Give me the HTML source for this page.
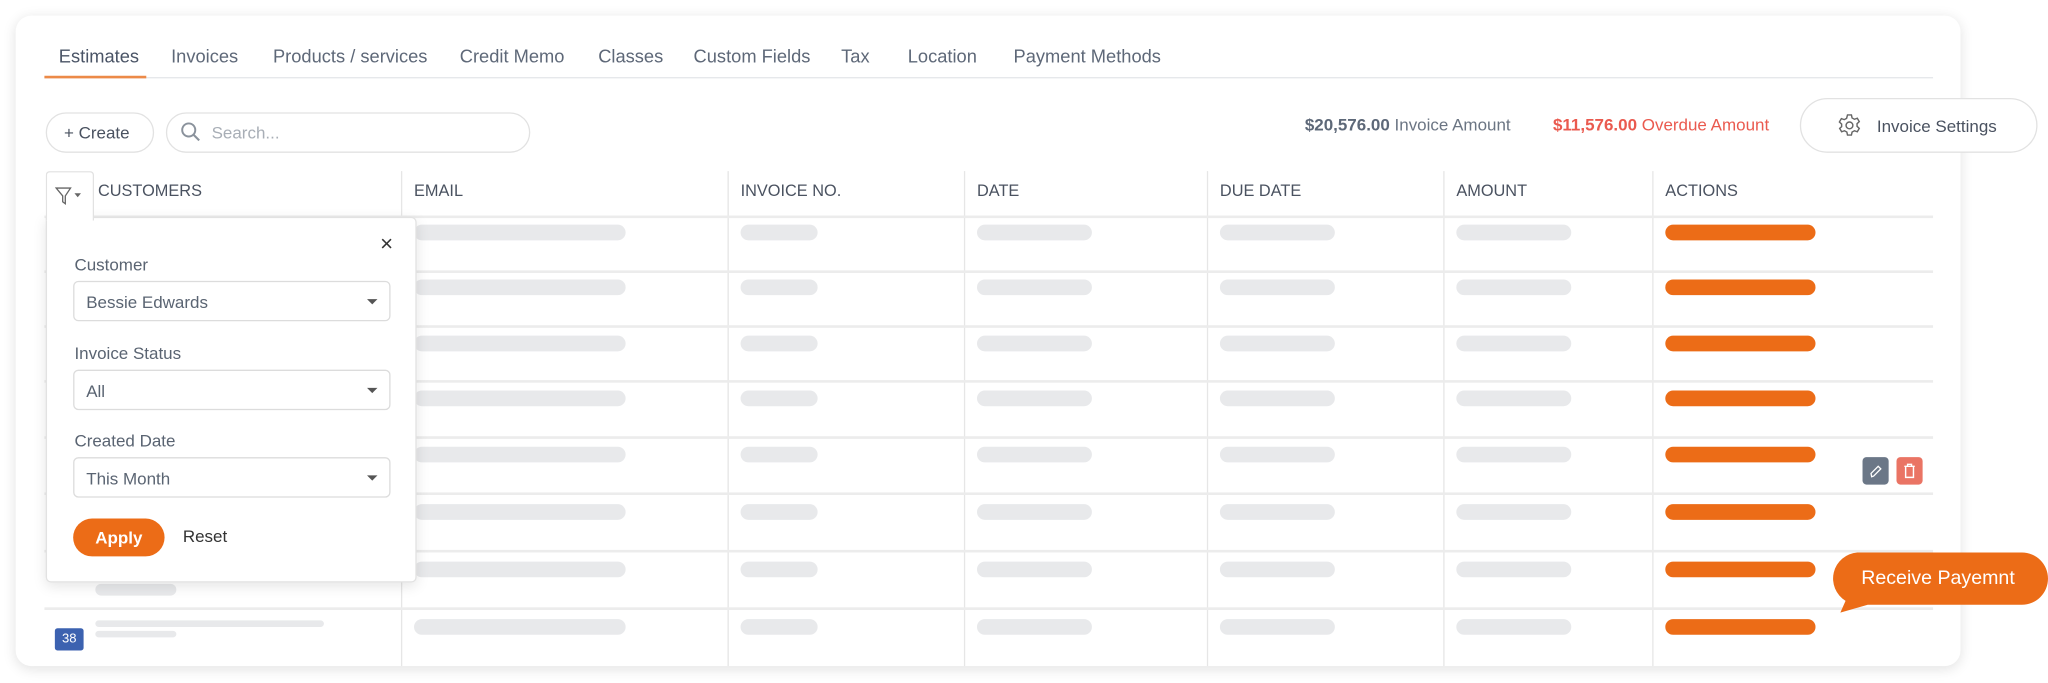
<!DOCTYPE html>
<html><head><meta charset="utf-8"><style>
*{box-sizing:border-box;margin:0;padding:0}
body{width:2048px;height:683px;background:#fff;font-family:"Liberation Sans",sans-serif;position:relative;overflow:hidden;color:#5a6472}
#w{position:absolute;left:0;top:0;width:1568px;height:523px;transform:scale(1.30612);transform-origin:0 0}
#w div{white-space:nowrap}
.card{position:absolute;left:12px;top:12px;width:1489px;height:498px;border-radius:12px;background:#fff;box-shadow:0 2px 10px rgba(0,0,0,.12)}
.abs{position:absolute}
.tab{position:absolute;top:35px;font-size:14px;color:#5e6878}
.bar{position:absolute;height:12px;border-radius:6px;background:#e8e9eb}
.or{position:absolute;height:12px;border-radius:6px;background:#ec6c17}
.vl{position:absolute;top:131px;width:1px;height:379px;background:#e6e6e6}
.hl{position:absolute;left:34px;width:1446px;height:2px;background:#ececec}
.th{position:absolute;top:139px;font-size:12.5px;color:#4a5260}
.sel{position:absolute;left:56px;width:243px;height:31px;border:1px solid #dcdcdc;border-radius:4px;font-size:13px;color:#5a6472;padding:8px 9px}
.sel:after{content:"";position:absolute;right:9px;top:13px;border:4px solid transparent;border-top:4px solid #555}
.lbl{position:absolute;left:57px;font-size:13px;color:#5a6472}
</style></head><body><div id="w">
<div class="card"></div>
<div class="tab" style="left:45px;color:#4a5466">Estimates</div>
<div class="tab" style="left:131px">Invoices</div>
<div class="tab" style="left:209px">Products / services</div>
<div class="tab" style="left:352px">Credit Memo</div>
<div class="tab" style="left:458px">Classes</div>
<div class="tab" style="left:531px">Custom Fields</div>
<div class="tab" style="left:644px">Tax</div>
<div class="tab" style="left:695px">Location</div>
<div class="tab" style="left:776px">Payment Methods</div>
<div class="abs" style="left:34px;top:59px;width:1446px;height:1px;background:#e4e6ea"></div>
<div class="abs" style="left:34px;top:58px;width:78px;height:2px;background:#ec8a48"></div>

<div class="abs" style="left:35px;top:86px;width:83px;height:31px;border:1px solid #e2e2e2;border-radius:16px;font-size:13px;color:#4a5260;padding:7px 0 0 13px">+ Create</div>
<div class="abs" style="left:127px;top:86px;width:279px;height:31px;border:1px solid #e2e2e2;border-radius:16px;font-size:13px;color:#a8aeb6;padding:7px 0 0 34px">Search...</div>
<svg class="abs" style="left:138px;top:93px" width="16" height="16" viewBox="0 0 16 16"><circle cx="6.5" cy="6.5" r="5" fill="none" stroke="#8a929c" stroke-width="1.5"/><path d="M10 10l4.5 4.5" stroke="#8a929c" stroke-width="1.6"/></svg>

<div class="abs" style="left:999px;top:88px;font-size:13px;color:#6b7583"><b style="color:#5d6878">$20,576.00</b> Invoice Amount</div>
<div class="abs" style="left:1189px;top:88px;font-size:13px;color:#ea5a4f"><b>$11,576.00</b> Overdue Amount</div>
<div class="abs" style="left:1378px;top:75px;width:182px;height:42px;border:1px solid #e2e2e2;border-radius:21px;background:#fff;font-size:13px;color:#4a5260;padding:13px 0 0 58px">Invoice Settings</div>
<svg class="abs" style="left:1406px;top:86px" width="20" height="20" viewBox="0 0 20 20"><path d="M8.5 2h3l.5 2.3 1.8 1 2.2-.8 1.5 2.6-1.7 1.6v2l1.7 1.6-1.5 2.6-2.2-.8-1.8 1-.5 2.3h-3l-.5-2.3-1.8-1-2.2.8-1.5-2.6L4 11V9L2.3 7.4 3.8 4.8l2.2.8 1.8-1z" fill="none" stroke="#666" stroke-width="1.1"/><circle cx="10" cy="10" r="2.6" fill="none" stroke="#666" stroke-width="1.1"/></svg>

<div class="vl" style="left:307px"></div><div class="vl" style="left:557px"></div><div class="vl" style="left:738px"></div><div class="vl" style="left:924px"></div><div class="vl" style="left:1105px"></div><div class="vl" style="left:1265px"></div>
<div class="hl" style="top:165px"></div><div class="hl" style="top:207px"></div><div class="hl" style="top:249px"></div><div class="hl" style="top:291px"></div><div class="hl" style="top:334px"></div><div class="hl" style="top:377px"></div><div class="hl" style="top:421px"></div><div class="hl" style="top:465px"></div>
<div class="th" style="left:75px">CUSTOMERS</div><div class="th" style="left:317px">EMAIL</div><div class="th" style="left:567px">INVOICE NO.</div><div class="th" style="left:748px">DATE</div><div class="th" style="left:934px">DUE DATE</div><div class="th" style="left:1115px">AMOUNT</div><div class="th" style="left:1275px">ACTIONS</div>

<div class="bar" style="left:317px;top:172px;width:162px"></div><div class="bar" style="left:567px;top:172px;width:59px"></div><div class="bar" style="left:748px;top:172px;width:88px"></div><div class="bar" style="left:934px;top:172px;width:88px"></div><div class="bar" style="left:1115px;top:172px;width:88px"></div><div class="or" style="left:1275px;top:172px;width:115px"></div>
<div class="bar" style="left:317px;top:214px;width:162px"></div><div class="bar" style="left:567px;top:214px;width:59px"></div><div class="bar" style="left:748px;top:214px;width:88px"></div><div class="bar" style="left:934px;top:214px;width:88px"></div><div class="bar" style="left:1115px;top:214px;width:88px"></div><div class="or" style="left:1275px;top:214px;width:115px"></div>
<div class="bar" style="left:317px;top:257px;width:162px"></div><div class="bar" style="left:567px;top:257px;width:59px"></div><div class="bar" style="left:748px;top:257px;width:88px"></div><div class="bar" style="left:934px;top:257px;width:88px"></div><div class="bar" style="left:1115px;top:257px;width:88px"></div><div class="or" style="left:1275px;top:257px;width:115px"></div>
<div class="bar" style="left:317px;top:299px;width:162px"></div><div class="bar" style="left:567px;top:299px;width:59px"></div><div class="bar" style="left:748px;top:299px;width:88px"></div><div class="bar" style="left:934px;top:299px;width:88px"></div><div class="bar" style="left:1115px;top:299px;width:88px"></div><div class="or" style="left:1275px;top:299px;width:115px"></div>
<div class="bar" style="left:317px;top:342px;width:162px"></div><div class="bar" style="left:567px;top:342px;width:59px"></div><div class="bar" style="left:748px;top:342px;width:88px"></div><div class="bar" style="left:934px;top:342px;width:88px"></div><div class="bar" style="left:1115px;top:342px;width:88px"></div><div class="or" style="left:1275px;top:342px;width:115px"></div>
<div class="bar" style="left:317px;top:386px;width:162px"></div><div class="bar" style="left:567px;top:386px;width:59px"></div><div class="bar" style="left:748px;top:386px;width:88px"></div><div class="bar" style="left:934px;top:386px;width:88px"></div><div class="bar" style="left:1115px;top:386px;width:88px"></div><div class="or" style="left:1275px;top:386px;width:115px"></div>
<div class="bar" style="left:317px;top:430px;width:162px"></div><div class="bar" style="left:567px;top:430px;width:59px"></div><div class="bar" style="left:748px;top:430px;width:88px"></div><div class="bar" style="left:934px;top:430px;width:88px"></div><div class="bar" style="left:1115px;top:430px;width:88px"></div><div class="or" style="left:1275px;top:430px;width:115px"></div>
<div class="bar" style="left:317px;top:474px;width:162px"></div><div class="bar" style="left:567px;top:474px;width:59px"></div><div class="bar" style="left:748px;top:474px;width:88px"></div><div class="bar" style="left:934px;top:474px;width:88px"></div><div class="bar" style="left:1115px;top:474px;width:88px"></div><div class="or" style="left:1275px;top:474px;width:115px"></div>
<div class="bar" style="left:73px;top:447px;width:62px;height:9px"></div>
<div class="bar" style="left:73px;top:475px;width:175px;height:5px"></div>
<div class="bar" style="left:73px;top:483px;width:62px;height:5px"></div>
<div class="abs" style="left:42px;top:481px;width:22px;height:17px;background:#3c62b0;border-radius:2px;color:#fff;font-size:10px;text-align:center;line-height:17px">38</div>

<div class="abs" style="left:1426px;top:350px;width:20px;height:21px;background:#6b7787;border-radius:3px"></div>
<svg class="abs" style="left:1430px;top:354px" width="12" height="13" viewBox="0 0 12 13"><path d="M3 11l-.5-2.5L8 3l2 2-5.5 5.5z" fill="none" stroke="#fff" stroke-width="1"/></svg>
<div class="abs" style="left:1452px;top:350px;width:20px;height:21px;background:#ea7464;border-radius:3px"></div>
<svg class="abs" style="left:1456px;top:354px" width="12" height="13" viewBox="0 0 12 13"><path d="M2 3h8M4.5 3V1.5h3V3M3 3.5v8h6v-8" fill="none" stroke="#fff" stroke-width="1.1"/></svg>

<svg class="abs" style="left:1400px;top:422px" width="170" height="48" viewBox="0 0 170 48"><path d="M22 1h126a20 20 0 0 1 0 40H30l-21 6 4-9A20 20 0 0 1 22 1z" fill="#ec6c17"/></svg>
<div class="abs" style="left:1425px;top:434px;font-size:15px;color:#fff">Receive Payemnt</div>

<div class="abs" style="left:35px;top:131px;width:37px;height:38px;background:#fff;border:1px solid #e2e2e2;border-bottom:none;border-radius:3px 3px 0 0;z-index:2"></div>
<svg class="abs" style="left:42px;top:142px;z-index:3" width="24" height="16" viewBox="0 0 24 16"><path d="M1 2h11L8 8v6l-2-1.5V8z" fill="none" stroke="#666" stroke-width="1"/><path d="M15 6h5l-2.5 3z" fill="#666"/></svg>
<div class="abs" style="left:35px;top:166px;width:284px;height:280px;background:#fff;border:1px solid #e2e2e2;border-radius:0 4px 4px 4px;box-shadow:0 3px 10px rgba(0,0,0,.1);z-index:1"></div>
<div style="position:absolute;left:0;top:0;z-index:4">
<div class="abs" style="left:291px;top:177px;font-size:17px;color:#333">×</div>
<div class="lbl" style="top:195px">Customer</div>
<div class="sel" style="top:215px">Bessie Edwards</div>
<div class="lbl" style="top:263px">Invoice Status</div>
<div class="sel" style="top:283px">All</div>
<div class="lbl" style="top:330px">Created Date</div>
<div class="sel" style="top:350px">This Month</div>
<div class="abs" style="left:56px;top:397px;width:70px;height:29px;border-radius:15px;background:#ec6c17;color:#fff;font-size:13px;text-align:center;line-height:29px;font-weight:bold">Apply</div>
<div class="abs" style="left:140px;top:403px;font-size:13px;color:#333">Reset</div>
</div>
</div></body></html>
